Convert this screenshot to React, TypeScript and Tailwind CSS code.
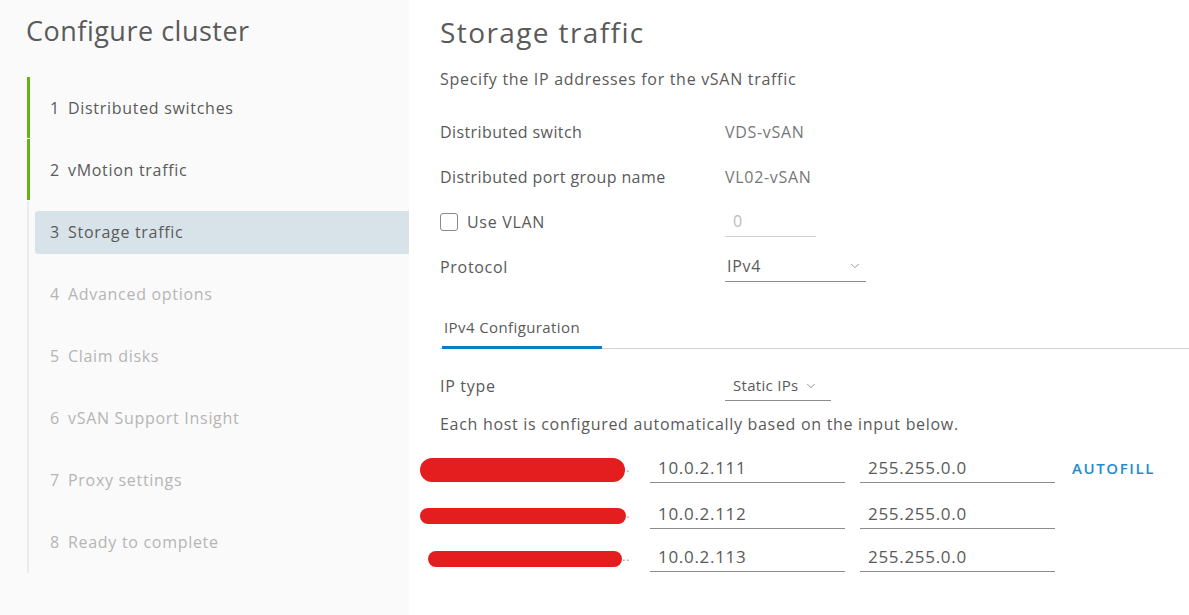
import { ChevronDown } from "lucide-react";

// ─── Wizard nav ──────────────────────────────────────────────────────────────

const steps = [
  { n: 1, label: "Distributed switches", state: "done" },
  { n: 2, label: "vMotion traffic", state: "done" },
  { n: 3, label: "Storage traffic", state: "current" },
  { n: 4, label: "Advanced options", state: "todo" },
  { n: 5, label: "Claim disks", state: "todo" },
  { n: 6, label: "vSAN Support Insight", state: "todo" },
  { n: 7, label: "Proxy settings", state: "todo" },
  { n: 8, label: "Ready to complete", state: "todo" },
];

const hosts = [
  { ip: "10.0.2.111", mask: "255.255.0.0", blob: "left-[-20px] w-[205px] top-[5px] h-[24px]" },
  { ip: "10.0.2.112", mask: "255.255.0.0", blob: "left-[-20px] w-[206px] top-[9px] h-[16px]" },
  { ip: "10.0.2.113", mask: "255.255.0.0", blob: "left-[-12px] w-[194px] top-[9px] h-[16px]" },
];

function StepItem({ n, label, state }: { n: number; label: string; state: string }) {
  return (
    <div className="flex h-[62px]">
      <div className="w-[3px] flex justify-start">
        {state === "done" ? (
          <div className="w-[3px] h-[61px] bg-[#60b515]" />
        ) : (
          <div className="w-[2px] h-full bg-[#ebebeb]" />
        )}
      </div>
      <div className="flex-1 flex items-center pl-[5px]">
        <div
          className={`w-full h-[43px] flex items-center pl-[15px] text-[16px] tracking-[0.7px] rounded-l-[3px] ${
            state === "current" ? "bg-[#d8e3e9] text-[#5a5a5a]" : state === "done" ? "text-[#5a5a5a]" : "text-[#b5b5b5]"
          }`}
        >
          <span className="w-[18px]">{n}</span>
          <span>{label}</span>
        </div>
      </div>
    </div>
  );
}

export default function App() {
  return (
    <div className="flex w-[1189px] h-[615px] bg-white overflow-hidden font-['Open_Sans',sans-serif] text-[#5a5a5a]">
      {/* Sidebar */}
      <aside className="w-[409px] shrink-0 bg-[#fafafa] flex flex-col">
        <h1 className="h-[62px] flex items-center pl-[26px] text-[27px] tracking-[0.5px] text-[#5a5a5a] font-normal">Configure cluster</h1>
        <nav className="ml-[27px] mt-[15px] flex flex-col">
          {steps.map((s) => (
            <StepItem key={s.n} {...s} />
          ))}
        </nav>
      </aside>

      {/* Main */}
      <main className="flex-1 flex flex-col pl-[31px] text-[16px] tracking-[0.7px]">
        <h2 className="h-[64px] flex items-center text-[28px] tracking-[1.4px] text-[#5a5a5a] font-normal">Storage traffic</h2>
        <p className="h-[30px] flex items-center">Specify the IP addresses for the vSAN traffic</p>

        <div className="mt-[15px] flex flex-col">
          <div className="h-[45px] flex items-center">
            <span className="w-[285px] tracking-[0.4px]">Distributed switch</span>
            <span className="text-[#777]">VDS-vSAN</span>
          </div>
          <div className="h-[45px] flex items-center">
            <span className="w-[285px] tracking-[0.4px]">Distributed port group name</span>
            <span className="text-[#777]">VL02-vSAN</span>
          </div>
          <div className="h-[45px] flex items-center">
            <label className="w-[285px] flex items-center gap-[9px]">
              <span className="w-[18px] h-[18px] border border-[#8a8a8a] rounded-[3px] bg-white" />
              Use VLAN
            </label>
            <div className="w-[91px] h-[30px] border-b border-[#cfcfcf] flex items-center pl-[8px] text-[#bcbcbc]">0</div>
          </div>
          <div className="h-[45px] flex items-center">
            <span className="w-[285px]">Protocol</span>
            <div className="w-[141px] h-[30px] border-b border-[#8c8c8c] flex items-center justify-between pl-[2px] pr-[4px]">
              <span>IPv4</span>
              <ChevronDown size={14} strokeWidth={1.5} className="text-[#888]" />
            </div>
          </div>
        </div>

        {/* Tabs */}
        <div className="mt-[19px] border-b border-[#d4d4d4] flex">
          <div className="ml-[2px] w-[160px] h-[41px] pl-[2px] flex items-center border-b-[3px] border-[#0f7bc0] -mb-px text-[15px] tracking-[0.4px]">
            IPv4 Configuration
          </div>
        </div>

        <div className="mt-[15px] h-[44px] flex items-center">
          <span className="w-[285px]">IP type</span>
          <div className="w-[106px] h-[30px] border-b border-[#8c8c8c] flex items-center gap-[6px] pl-[8px] text-[15px] tracking-[0.3px]">
            <span>Static IPs</span>
            <ChevronDown size={14} strokeWidth={1.5} className="text-[#888]" />
          </div>
        </div>
        <p className="h-[32px] flex items-center">Each host is configured automatically based on the input below.</p>

        <div className="flex flex-col">
          {hosts.map((h, i) => (
            <div key={h.ip} className={`flex items-center h-[30px] ${i === 0 ? "mt-[13px]" : i === 1 ? "mt-[16px]" : "mt-[13px]"}`}>
              <div className="relative w-[210px] h-[30px] flex items-center justify-end pr-[20px] text-[#999] text-[12px]">
                <span>...</span>
                <div className={`absolute rounded-full bg-[#e41e1e] ${h.blob}`} />
              </div>
              <div className="w-[195px] h-[30px] border-b border-[#8c8c8c] flex items-center pl-[8px] text-[17px] tracking-[0.7px]">{h.ip}</div>
              <div className="ml-[15px] w-[195px] h-[30px] border-b border-[#8c8c8c] flex items-center pl-[8px] text-[17px] tracking-[0.7px]">{h.mask}</div>
              {i === 0 && (
                <button className="ml-[17px] text-[15px] font-semibold tracking-[1.6px] text-[#1c8ccd]">AUTOFILL</button>
              )}
            </div>
          ))}
        </div>
      </main>
    </div>
  );
}
